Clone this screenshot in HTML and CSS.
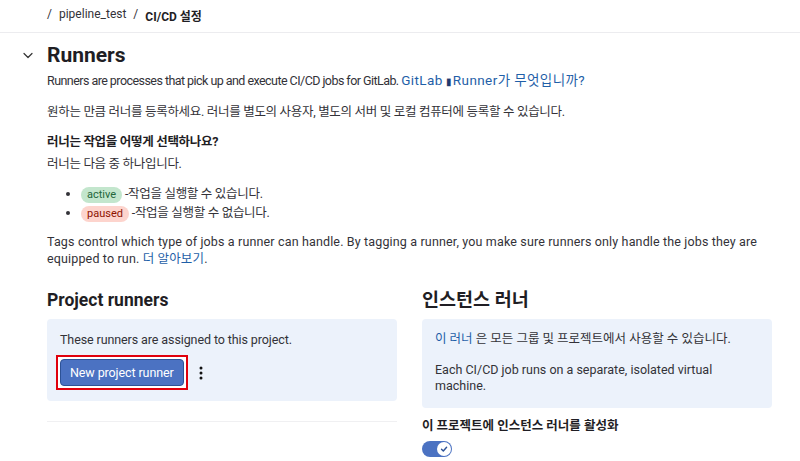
FILE: index.html
```html
<!DOCTYPE html>
<html lang="ko">

<head>
    <meta charset="UTF-8">
    <meta name="viewport" content="width=device-width, initial-scale=1.0">
    <title>CI/CD 설정</title>
    <link rel="stylesheet" href="styles.css">
</head>

<body>
    <!-- Breadcrumb -->
    <div class="breadcrumb">
        <span class="sep">/</span>
        <a href="#">pipeline_test</a>
        <span class="sep">/</span>
        <strong>CI/CD 설정</strong>
    </div>

    <!-- Runners section -->
    <section class="section">
        <div class="section-head">
            <svg class="chevron" width="16" height="16" viewBox="0 0 16 16">
                <path d="M4 6.5 L8 10.5 L12 6.5" fill="none" stroke="#333" stroke-width="1.2" stroke-linecap="round" stroke-linejoin="round" />
            </svg>
            <h1>Runners</h1>
        </div>

        <div class="section-body">
            <p class="lead">Runners are processes that pick up and execute CI/CD jobs for GitLab. <a href="#" class="help-link">GitLab <span class="cursor">▮</span>Runner가 무엇입니까?</a></p>

            <p class="mt">원하는 만큼 러너를 등록하세요. 러너를 별도의 사용자, 별도의 서버 및 로컬 컴퓨터에 등록할 수 있습니다.</p>

            <p class="question">러너는 작업을 어떻게 선택하나요?</p>
            <p>러너는 다음 중 하나입니다.</p>

            <ul class="states">
                <li><span class="badge badge-active">active</span> -작업을 실행할 수 있습니다.</li>
                <li><span class="badge badge-paused">paused</span> -작업을 실행할 수 없습니다.</li>
            </ul>

            <p class="tags">Tags control which type of jobs a runner can handle. By tagging a runner, you make sure runners only handle the jobs they are equipped to run. <a href="#">더 알아보기</a>.</p>

            <div class="columns">
                <!-- Project runners -->
                <div class="col">
                    <h2>Project runners</h2>
                    <div class="panel panel-project">
                        <p>These runners are assigned to this project.</p>
                        <div class="actions">
                            <span class="highlight">
                                <button type="button">New project runner</button>
                            </span>
                            <svg class="kebab" width="16" height="16" viewBox="0 0 16 16">
                                <circle cx="8" cy="3" r="1.5" fill="#111" />
                                <circle cx="8" cy="8" r="1.5" fill="#111" />
                                <circle cx="8" cy="13" r="1.5" fill="#111" />
                            </svg>
                        </div>
                    </div>
                    <div class="divider"></div>
                </div>

                <!-- Instance runners -->
                <div class="col">
                    <h2 class="ko">인스턴스 러너</h2>
                    <div class="panel panel-instance">
                        <p class="avail"><a href="#">이 러너</a> 은 모든 그룹 및 프로젝트에서 사용할 수 있습니다.</p>
                        <p class="note">Each CI/CD job runs on a separate, isolated virtual machine.</p>
                    </div>
                    <p class="toggle-label">이 프로젝트에 인스턴스 러너를 활성화</p>
                    <span class="toggle">
                        <span class="knob">
                            <svg width="10" height="10" viewBox="0 0 10 10">
                                <path d="M2.5 5.2 L4.3 7 L7.6 3.2" fill="none" stroke="#2d5296" stroke-width="1.4" stroke-linecap="round" stroke-linejoin="round" />
                            </svg>
                        </span>
                    </span>
                </div>
            </div>
        </div>
    </section>
</body>

</html>
```

FILE: styles.css
```css
/* Base */
body {
    font-family: Roboto, "Noto Sans CJK KR", sans-serif;
    font-size: 12.5px;
    letter-spacing: -0.3px;
    color: #333238;
    margin: 0;
    background: #fff;
}

p {
    margin: 0;
    line-height: 18px;
}

a {
    color: #1f5fa8;
    text-decoration: none;
}

/* Breadcrumb */
.breadcrumb {
    height: 25px;
    display: flex;
    align-items: flex-start;
    gap: 7px;
    padding: 7px 0 0 47px;
    border-bottom: 1px solid #ececef;
    font-size: 12px;
    letter-spacing: 0;
}

.breadcrumb a {
    color: #333238;
}

.breadcrumb strong {
    color: #1f1e24;
    font-weight: 700;
}

/* Section */
.section {
    padding: 0 28px 0 20px;
}

.section-head {
    display: flex;
    align-items: center;
    height: 42px;
    margin-top: 1px;
}

.chevron {
    width: 16px;
    margin-right: 11px;
}

h1 {
    margin: 0;
    font-size: 21px;
    font-weight: 700;
    color: #1f1e24;
    letter-spacing: 0;
}

.section-body {
    padding-left: 27px;
}

.lead {
    margin-top: -5px;
    letter-spacing: -0.55px;
}

.help-link {
    font-size: 13.5px;
    letter-spacing: 0.4px;
}

.mt {
    margin-top: 12px;
}

.cursor {
    font-size: 10px;
    color: #1f3a6e;
}

.question {
    font-weight: 700;
    color: #1f1e24;
    margin-top: 12px;
    margin-bottom: 4px;
}

/* States list */
.states {
    margin: 11px 0 0;
    padding-left: 34px;
}

.states li {
    line-height: 19px;
}

.badge {
    display: inline-block;
    padding: 0 6px;
    border-radius: 9px;
    font-size: 11px;
    line-height: 16px;
    letter-spacing: 0;
}

.badge-active {
    background: #c3e6cd;
    color: #24663b;
}

.badge-paused {
    background: #fdd4cd;
    color: #8d1300;
}

.tags {
    max-width: 716px;
    margin-top: 11px;
    line-height: 17px;
    letter-spacing: 0.15px;
}

/* Columns */
.columns {
    display: grid;
    grid-template-columns: 350px 350px;
    gap: 25px;
    margin-top: 23px;
}

h2 {
    margin: 0 0 9px;
    font-size: 17.5px;
    font-weight: 700;
    color: #1f1e24;
    line-height: 20px;
    letter-spacing: 0;
}

h2.ko {
    font-size: 18.5px;
}

.panel {
    background: #ecf2fb;
    border-radius: 4px;
}

.panel-project {
    padding: 12px 13px 11px;
}

.panel-project p {
    letter-spacing: -0.1px;
}

.panel-instance {
    padding: 12px 13px 14px;
}

.panel-instance p {
    line-height: 16px;
}

.panel-instance .avail {
    letter-spacing: 0;
}

.panel-instance .note {
    margin-top: 15px;
    letter-spacing: 0;
    padding-right: 40px;
}

.actions {
    display: flex;
    align-items: center;
    gap: 5px;
    margin-top: 6px;
    margin-left: -4px;
}

.highlight {
    display: inline-block;
    padding: 2px;
    border: 2px solid #e0000c;
    background: #fff;
}

button {
    display: block;
    height: 27px;
    padding: 0 9px;
    background: #4b72c2;
    border: 1px solid #2d5296;
    border-radius: 4px;
    color: #fff;
    font-family: Roboto, "Noto Sans CJK KR", sans-serif;
    font-size: 12.5px;
    letter-spacing: -0.1px;
    cursor: pointer;
}

.divider {
    margin-top: 20px;
    border-top: 1px solid #f0f0f2;
}

.toggle-label {
    margin-top: 10px;
    line-height: 16px;
    font-weight: 700;
    color: #1f1e24;
    letter-spacing: 0;
}

.toggle {
    display: flex;
    align-items: center;
    justify-content: flex-end;
    width: 30px;
    height: 16px;
    margin-top: 7px;
    padding: 0 1px;
    border-radius: 9px;
    background: #4b72c2;
    box-sizing: border-box;
}

.knob {
    display: flex;
    align-items: center;
    justify-content: center;
    width: 14px;
    height: 14px;
    border-radius: 50%;
    background: #fff;
}
```
